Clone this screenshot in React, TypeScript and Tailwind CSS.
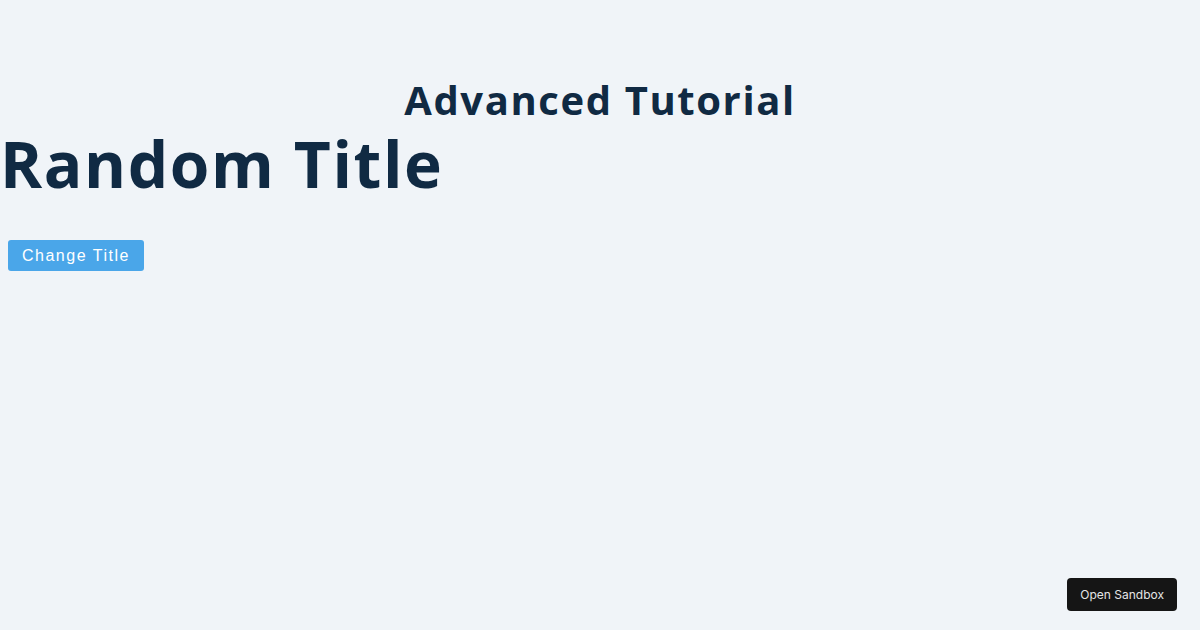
export default function App() {
  return (
    <div className="relative w-[1200px] h-[630px] bg-[#f0f4f8] overflow-hidden font-['Open_Sans',sans-serif] text-[#102a43]">
      <h1 className="pt-[72px] text-center text-[40px] leading-[56px] font-bold tracking-[1.6px]">
        Advanced Tutorial
      </h1>
      <h2 className="-mt-[2px] text-[64px] leading-[76px] font-bold tracking-[1.6px]">Random Title</h2>
      <button className="ml-2 mt-[38px] h-[31px] px-[14px] rounded-[3px] bg-[#4aa6e9] text-white text-[16px] tracking-[1.5px] font-['Liberation_Sans',sans-serif]">
        Change Title
      </button>
      <button className="absolute right-[23px] bottom-[19px] h-[33px] px-[13px] rounded-[4px] bg-[#151515] text-[#e5e5e5] text-[12px] font-['Inter',sans-serif]">
        Open Sandbox
      </button>
    </div>
  );
}
